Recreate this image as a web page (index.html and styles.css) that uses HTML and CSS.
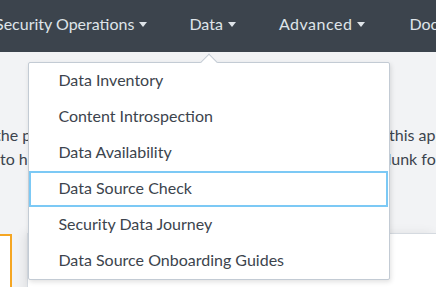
FILE: index.html
```html
<!DOCTYPE html>
<html>
<head>
<meta charset="utf-8">
<link rel="stylesheet" href="styles.css">
</head>
<body>
<header class="nav">
  <ul class="nav-list">
    <li class="nav-item">Security Operations<span class="caret"></span></li>
    <li class="nav-item nav-item-open">Data<span class="caret"></span>
      <div class="menu">
        <span class="menu-arrow"></span>
        <ul class="menu-list">
          <li class="menu-item">Data Inventory</li>
          <li class="menu-item">Content Introspection</li>
          <li class="menu-item">Data Availability</li>
          <li class="menu-item menu-item-focus">Data Source Check</li>
          <li class="menu-item">Security Data Journey</li>
          <li class="menu-item">Data Source Onboarding Guides</li>
        </ul>
      </div>
    </li>
    <li class="nav-item nav-item-wide">Advanced<span class="caret"></span></li>
    <li class="nav-item">Documentation</li>
  </ul>
</header>
<main class="page">
  <div class="intro">
    <p class="line line-first"><span class="line-a">the presets below describe</span><span class="line-b">this app provides</span></p>
    <p class="line line-second"><span class="line-a">to help you get started with</span><span class="line-b">Splunk for</span></p>
  </div>
  <div class="cards">
    <div class="card card-active"></div>
    <div class="card card-main"></div>
  </div>
</main>
</body>
</html>
```
FILE: styles.css
```css
* { box-sizing: border-box; }
html, body { margin: 0; padding: 0; }
body {
  width: 436px;
  height: 287px;
  overflow: hidden;
  background: #f2f3f5;
  font-family: Lato, "Open Sans", sans-serif;
  font-size: 16px;
  color: #3c444d;
}
.nav {
  height: 52px;
  background: #3c444d;
  display: flex;
  align-items: flex-start;
}
.nav-list {
  list-style: none;
  margin: 0 0 0 -26px;
  padding: 0;
  display: flex;
  align-items: flex-start;
  white-space: nowrap;
}
.nav-item {
  position: relative;
  padding: 0 21px;
  color: #dfe4e9;
  font-size: 16px;
  line-height: 48px;
}
.nav-item-wide {
  padding-left: 22px;
  padding-right: 23px;
  letter-spacing: 0.5px;
}
.caret {
  display: inline-block;
  width: 0;
  height: 0;
  border-left: 4px solid transparent;
  border-right: 4px solid transparent;
  border-top: 5px solid #dfe4e9;
  vertical-align: 3px;
  margin-left: 5px;
}
.menu {
  position: absolute;
  left: -140px;
  top: 62px;
  width: 362px;
  background: #fff;
  border: 1px solid #c3cbd4;
  border-radius: 2px;
  box-shadow: 1px 2px 5px rgba(0, 0, 0, 0.12);
  z-index: 5;
  letter-spacing: 0;
}
.menu-arrow {
  position: absolute;
  left: 174px;
  top: -7px;
  width: 12px;
  height: 12px;
  background: #fff;
  border-left: 1px solid #c3cbd4;
  border-top: 1px solid #c3cbd4;
  transform: rotate(45deg);
}
.menu-list {
  list-style: none;
  margin: 0;
  padding: 0;
  position: relative;
}
.menu-item {
  height: 36px;
  line-height: 32px;
  padding: 0 28px;
  color: #3c444d;
  font-size: 16px;
  border: 1px solid transparent;
}
.menu-item-focus {
  border: 2px solid #7cc9f5;
  line-height: 30px;
  padding-left: 27px;
  margin-right: 1px;
}
.page {
  padding-top: 70px;
}
.intro {
  height: 50px;
}
.line {
  margin: 0;
  display: flex;
  white-space: nowrap;
  line-height: 25px;
  color: #3c444d;
}
.line-a {
  flex: none;
  overflow: hidden;
}
.line-first {
  margin-left: -5px;
}
.line-first .line-a {
  width: 394px;
}
.line-second {
  margin-top: -1px;
}
.line-second .line-a {
  width: 370px;
}
.cards {
  margin-top: 61px;
  display: flex;
  align-items: flex-start;
}
.card {
  background: #fff;
  height: 120px;
}
.card-active {
  margin-left: -20px;
  margin-top: 1px;
  width: 32px;
  flex: none;
  border: 2px solid #f5a623;
}
.card-main {
  margin-left: 15px;
  flex: 1;
  border: 1px solid #d5dae0;
  border-right: none;
  box-shadow: -3px 0 10px rgba(0, 0, 0, 0.08);
}
```
